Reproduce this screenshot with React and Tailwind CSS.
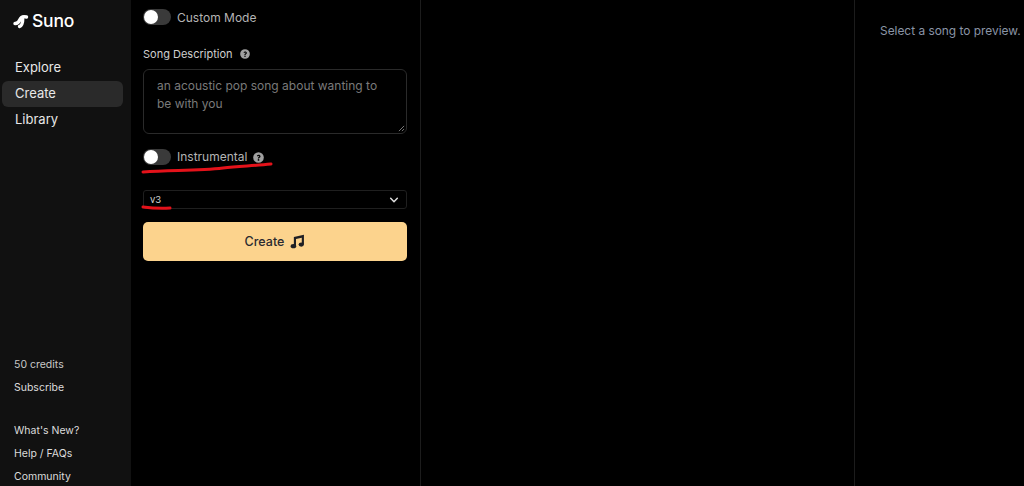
import React from "react";

const font = { fontFamily: "Inter, 'Liberation Sans', sans-serif" };

function Toggle() {
  return (
    <div className="w-[28px] h-[16px] rounded-full bg-[#3a3a3a] flex items-center pl-[1px] shrink-0">
      <div className="w-[14px] h-[14px] rounded-full bg-white" />
    </div>
  );
}

function HelpIcon({ className }) {
  return (
    <svg viewBox="0 0 512 512" className={className} fill="#a0a0a0">
      <path d="M256 8a248 248 0 1 0 0 496 248 248 0 0 0 0-496zm0 400a40 40 0 1 1 0-80 40 40 0 0 1 0 80zm54-142c-20 13-24 18-24 32v6h-60v-10c0-32 17-47 38-60 17-11 25-17 25-29 0-13-13-22-30-22-19 0-32 10-42 24l-38-29c19-29 46-47 84-47 44 0 88 27 88 73 0 34-18 49-41 62z" />
    </svg>
  );
}

function NavItem({ children, active }) {
  return (
    <div className={`h-[26px] rounded-[6px] pl-[13px] flex items-center text-[13px] text-[#e8e8e8] ${active ? "bg-[#2a2a2a]" : ""}`}>
      {children}
    </div>
  );
}

export default function App() {
  return (
    <div className="relative flex h-[486px] w-[1024px] overflow-hidden bg-black" style={font}>
      {/* sidebar */}
      <aside className="w-[131px] shrink-0 h-full bg-[#111111] flex flex-col">
        <div className="flex items-center gap-[3px] pl-[13px] h-[42px]">
          <svg viewBox="0 0 16 16" className="w-[16px] h-[16px]" fill="none" stroke="#fff" strokeWidth="3.4" strokeLinecap="round" strokeLinejoin="round">
            <path d="M2 10.500c3 .2 4-1.500 5-4 1-2.500 3-3.500 6.500-2.500" />
            <path d="M9.800 4.500c0 4-1 8.500-3.300 9" />
          </svg>
          <span className="text-[17.5px] font-medium text-white tracking-[-0.2px]">Suno</span>
        </div>
        <nav className="mt-[13px] pl-[2px] pr-[8px] flex flex-col">
          <NavItem>Explore</NavItem>
          <NavItem active>Create</NavItem>
          <NavItem>Library</NavItem>
        </nav>
        <div className="mt-auto pl-[14px] flex flex-col text-[10.5px] text-[#dcdcdc]">
          <div className="h-[23px] flex items-center text-[#c8c8c8]">50 credits</div>
          <div className="h-[23px] flex items-center">Subscribe</div>
          <div className="h-[20px]" />
          <div className="h-[23px] flex items-center">What's New?</div>
          <div className="h-[23px] flex items-center">Help / FAQs</div>
          <div className="h-[23px] flex items-center -mb-[2px]">Community</div>
        </div>
      </aside>

      {/* form column */}
      <section className="w-[290px] shrink-0 border-r border-[#1c1c1c] pl-[12px] pr-[13px] pt-[9px]">
        <div className="flex items-center gap-[6px] h-[16px]">
          <Toggle />
          <span className="text-[12px] text-[#b4b4b4] pt-[1px]">Custom Mode</span>
        </div>
        <div className="mt-[21px] flex items-center gap-[7px] h-[16px]">
          <span className="text-[11px] text-[#cfcfcf] pt-[1px]">Song Description</span>
          <HelpIcon className="w-[10px] h-[10px]" />
        </div>
        <div className="mt-[7px] relative h-[65px] rounded-[6px] border border-[#2a2a2a] pl-[13px] pr-[16px] pt-[7px] text-[12px] leading-[18px] text-[#7a7a7a]">
          an acoustic pop song about wanting to be with you
          <svg viewBox="0 0 8 8" className="absolute right-[1px] bottom-[1px] w-[7px] h-[7px]" stroke="#888" strokeWidth="1">
            <path d="M1 7 7 1M4.500 7 7 4.500" />
          </svg>
        </div>
        <div className="mt-[15px] flex items-center gap-[6px] h-[16px]">
          <Toggle />
          <span className="text-[12px] text-[#b4b4b4]">Instrumental</span>
          <HelpIcon className="w-[11px] h-[11px]" />
        </div>
        <div className="mt-[25px] h-[19px] rounded-[3px] border border-[#1f1f1f] flex items-center justify-between pl-[6px] pr-[7px]">
          <span className="text-[9.500px] text-[#d0d0d0] pt-[1px]">v3</span>
          <svg viewBox="0 0 12 12" className="w-[10px] h-[10px]" fill="none" stroke="#ddd" strokeWidth="1.800" strokeLinecap="round" strokeLinejoin="round">
            <path d="M2 4l4 4 4-4" />
          </svg>
        </div>
        <button className="mt-[13px] w-full h-[39px] rounded-[5px] bg-[#fcd38d] flex items-center justify-center gap-[6px] text-[12.500px] font-medium text-[#2a2a30]">
          <span className="pt-[1px]">Create</span>
          <svg viewBox="0 0 14 14" className="w-[15px] h-[15px]" fill="#1f1f24">
            <path d="M3.600 2.800 13 .8v9h-2V3.400L5.600 4.600v7h-2z" />
            <ellipse cx="3.200" cy="11.400" rx="2.600" ry="2" />
            <ellipse cx="10.500" cy="9.900" rx="2.500" ry="1.900" />
          </svg>
        </button>
      </section>

      {/* middle column */}
      <section className="w-[434px] shrink-0 border-r border-[#1c1c1c]" />

      {/* preview column */}
      <section className="flex-1 pl-[25px] pt-[22px] text-[11.900px] text-[#8a94a6] whitespace-nowrap">
        Select a song to preview.
      </section>

      {/* red pen marks over the screenshot */}
      <svg className="absolute inset-0 pointer-events-none" width="1024" height="486" fill="none" stroke="#e4121a" strokeWidth="3" strokeLinecap="round">
        <path d="M143 172c30-2 55-1 80-4 15-2 30-2 48-4" />
        <path d="M143 207c8 1 18 1.500 27 1" />
      </svg>
    </div>
  );
}
